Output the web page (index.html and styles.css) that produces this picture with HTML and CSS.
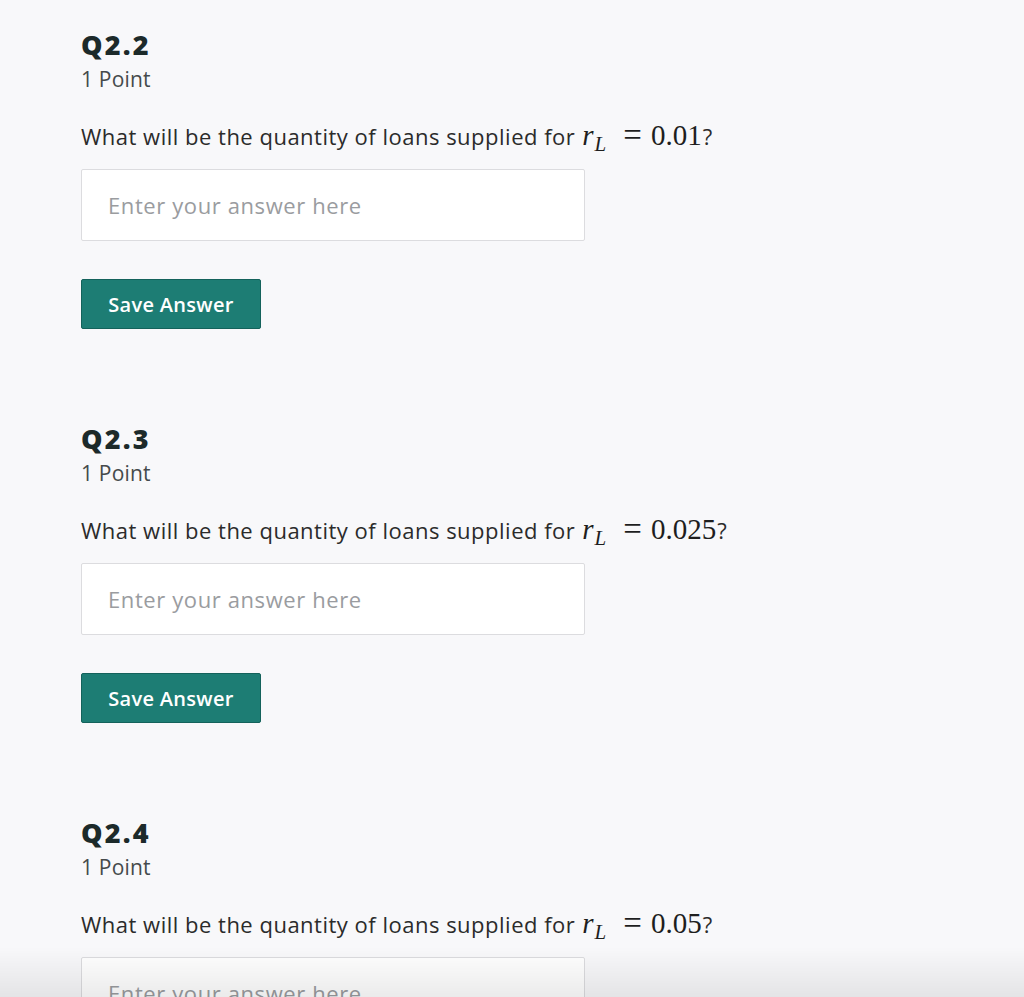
FILE: index.html
```html
<!DOCTYPE html>
<html>
<head>
<meta charset="utf-8">
<link rel="stylesheet" href="styles.css">
</head>
<body>
<main class="page">
  <section class="question">
    <h2 class="q-title">Q2.2</h2>
    <div class="q-points">1 Point</div>
    <p class="q-text">What will be the quantity of loans supplied for <span class="math"><i>r</i><sub><i>L</i></sub><span class="eq">=</span>0.01</span>?</p>
    <div class="answer">Enter your answer here</div>
    <button class="save">Save Answer</button>
  </section>
  <section class="question">
    <h2 class="q-title">Q2.3</h2>
    <div class="q-points">1 Point</div>
    <p class="q-text">What will be the quantity of loans supplied for <span class="math"><i>r</i><sub><i>L</i></sub><span class="eq">=</span>0.025</span>?</p>
    <div class="answer">Enter your answer here</div>
    <button class="save">Save Answer</button>
  </section>
  <section class="question">
    <h2 class="q-title">Q2.4</h2>
    <div class="q-points">1 Point</div>
    <p class="q-text">What will be the quantity of loans supplied for <span class="math"><i>r</i><sub><i>L</i></sub><span class="eq">=</span>0.05</span>?</p>
    <div class="answer">Enter your answer here</div>
    <button class="save">Save Answer</button>
  </section>
</main>
<div class="bottom-shade"></div>
</body>
</html>
```
FILE: styles.css
```css
html, body {
  margin: 0;
  padding: 0;
  background: #f8f8fa;
  overflow: hidden;
}
body {
  font-family: "Open Sans", Lato, sans-serif;
  color: #2b2b2b;
}
.page {
  padding: 28px 0 0 81px;
}
.question {
  display: flex;
  flex-direction: column;
  align-items: flex-start;
  height: 394px;
}
.q-title {
  margin: 0;
  font-size: 27px;
  font-weight: 800;
  line-height: 34px;
  letter-spacing: 2.2px;
  color: #1c2a2a;
}
.q-points {
  margin-top: 4px;
  font-size: 21px;
  line-height: 26px;
  letter-spacing: 0.2px;
  color: #454a4b;
}
.q-text {
  margin: 26px 0 0;
  font-size: 22px;
  line-height: 30px;
  letter-spacing: 0.5px;
  color: #2b2b2b;
  display: flex;
  align-items: baseline;
}
.math {
  font-family: "Liberation Serif", serif;
  font-size: 29px;
  letter-spacing: 0;
  margin-left: 7px;
  margin-right: 1px;
  color: #1e1e1e;
}
.math sub {
  font-size: 21px;
  vertical-align: -6px;
  margin-left: 1px;
}
.eq {
  display: inline-block;
  font-size: 33px;
  line-height: 1;
  margin: 0 9px 0 17px;
  transform: translateY(1px);
}
.answer {
  box-sizing: border-box;
  margin-top: 10px;
  width: 504px;
  height: 72px;
  background: #ffffff;
  border: 1px solid #dcdcdf;
  border-radius: 2px;
  padding: 0 26px;
  display: flex;
  align-items: center;
  font-size: 22px;
  letter-spacing: 0.6px;
  color: #9a9ca0;
}
.save {
  margin-top: 38px;
  width: 180px;
  height: 50px;
  background: #1d7d74;
  border: 1px solid #14625b;
  border-radius: 2px;
  color: #ffffff;
  font-family: "Open Sans", Lato, sans-serif;
  font-size: 20px;
  font-weight: 600;
  letter-spacing: 0.3px;
  padding: 0;
  cursor: pointer;
}
.bottom-shade {
  position: fixed;
  left: 0;
  right: 0;
  bottom: 0;
  height: 50px;
  background: linear-gradient(to bottom, rgba(0,0,0,0), rgba(0,0,0,0.08));
  pointer-events: none;
}
```
